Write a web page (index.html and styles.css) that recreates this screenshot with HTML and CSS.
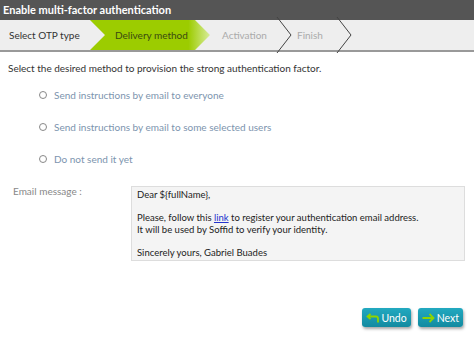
FILE: index.html
```html
<!DOCTYPE html>
<html lang="en">
  <head>
    <meta charset="UTF-8" />
    <title>Enable multi-factor authentication</title>
    <link rel="stylesheet" href="styles.css">
  </head>
  <body>
    <div class="wizard">
      <div class="title">Enable multi-factor authentication</div>
      <div class="steps">
        <div class="step step-done">Select OTP type</div>
        <div class="step step-current">Delivery method</div>
        <div class="step step-next step-activation">Activation
          <svg class="sep" width="16" height="36" viewBox="0 0 16 36"><polyline points="1,0 15,18 1,36" fill="none" stroke="#444" stroke-width="1"/></svg>
        </div>
        <div class="step step-next step-finish">Finish
          <svg class="sep" width="16" height="36" viewBox="0 0 16 36"><polyline points="1,0 15,18 1,36" fill="none" stroke="#444" stroke-width="1"/></svg>
        </div>
      </div>

      <p class="intro">Select the desired method to provision the strong authentication factor.</p>

      <div class="options">
        <label class="option"><span class="radio"></span>Send instructions by email to everyone</label>
        <label class="option"><span class="radio"></span>Send instructions by email to some selected users</label>
        <label class="option"><span class="radio"></span>Do not send it yet</label>
      </div>

      <div class="field">
        <div class="field-label">Email message :</div>
        <div class="message">
          <p>Dear ${fullName},</p>
          <p>Please, follow this <a href="#">link</a> to register your authentication email address.<br>It will be used by Soffid to verify your identity.</p>
          <p>Sincerely yours, Gabriel Buades</p>
        </div>
      </div>

      <div class="actions">
        <button class="btn">
          <svg width="13" height="10" viewBox="0 0 13 10"><path d="M12 9.5V5.5Q12 3.5 10 3.5H1.5M4.5 0.8L1.5 3.5L4.5 6.2" fill="none" stroke="#8fd400" stroke-width="1.8"/></svg>
          Undo
        </button>
        <button class="btn">
          <svg width="13" height="10" viewBox="0 0 13 10"><path d="M0.5 5H11.5M7.5 1L11.5 5L7.5 9" fill="none" stroke="#8fd400" stroke-width="1.8"/></svg>
          Next
        </button>
      </div>
    </div>
  </body>
</html>
```

FILE: styles.css
```css
body {
  margin: 0;
  font-family: Lato, "Open Sans", Arial, sans-serif;
  font-size: 10px;
  color: #333;
  background: #fff;
}

.wizard {
  width: 474px;
  height: 340px;
  display: flex;
  flex-direction: column;
}

.title {
  height: 20px;
  line-height: 20px;
  padding-left: 3px;
  background: #555;
  color: #fff;
  font-weight: bold;
  font-size: 11px;
}

.steps {
  height: 30px;
  display: flex;
  background: #eee;
  border-bottom: 2px solid #999;
}

.step {
  position: relative;
  display: flex;
  align-items: center;
  box-sizing: border-box;
  font-size: 10px;
}

.step-done {
  width: 90px;
  padding-left: 9px;
  color: #333;
}

.step-current {
  width: 120px;
  padding-left: 25px;
  color: #3a4a10;
  background: linear-gradient(to right, #9ccc00 0%, #9ccc00 82%, #d8ec9a 100%);
  clip-path: polygon(0 0, 105px 0, 120px 50%, 105px 100%, 0 100%, 15px 50%);
}

.step-next {
  color: #aaa;
}

.step-activation {
  width: 82px;
  padding-left: 12px;
}

.step-finish {
  width: 60px;
  padding-left: 5px;
}

.step-next .sep {
  position: absolute;
  right: 0;
  top: -3px;
}

.intro {
  margin: 10px 0 0 8px;
  font-size: 10px;
  color: #333;
}

.options {
  display: flex;
  flex-direction: column;
  gap: 18px;
  margin: 14px 0 0 39px;
}

.option {
  display: flex;
  align-items: center;
  gap: 7px;
  color: #7c94ae;
  height: 14px;
}

.radio {
  width: 6px;
  height: 6px;
  border: 1px solid #888;
  border-radius: 50%;
}

.field {
  display: flex;
  margin-top: 20px;
}

.field-label {
  width: 131px;
  padding: 0 0 0 13px;
  box-sizing: border-box;
  line-height: 10px;
  color: #888;
}

.message {
  width: 334px;
  height: 75px;
  box-sizing: border-box;
  padding: 2px 5px;
  background: #f4f4f4;
  border: 1px solid #ddd;
  font-size: 9.5px;
  line-height: 12px;
  color: #222;
}

.message p {
  margin: 0 0 11px;
}

.message a {
  color: #2233cc;
}

.actions {
  display: flex;
  justify-content: flex-end;
  gap: 7px;
  margin-top: auto;
  padding: 0 11px 13px 0;
}

.btn {
  display: flex;
  align-items: center;
  gap: 2px;
  height: 19px;
  padding: 0 4px;
  border: none;
  border-radius: 3px;
  background: linear-gradient(#22a9c0, #138aa0);
  box-shadow: 1px 2px 3px rgba(0, 0, 0, 0.35);
  color: #fff;
  font-family: Lato, Arial, sans-serif;
  font-size: 10.5px;
}
```
